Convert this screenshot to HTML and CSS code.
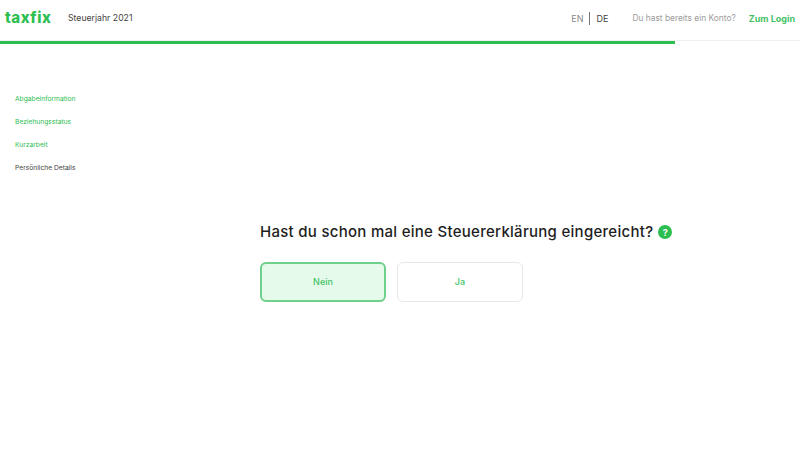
FILE: index.html
```html
<!DOCTYPE html>
<html lang="de">
<head>
  <meta charset="UTF-8">
  <title>Taxfix</title>
  <link rel="stylesheet" href="styles.css">
</head>
<body>
  <div class="header">
    <div class="brand">
      <span class="logo">taxfix</span>
      <span class="year">Steuerjahr 2021</span>
    </div>
    <div class="account">
      <span class="lang">EN</span>
      <span class="lang-sep"></span>
      <span class="lang lang-active">DE</span>
      <span class="hint">Du hast bereits ein Konto?</span>
      <a class="login">Zum Login</a>
    </div>
  </div>
  <div class="progress"></div>

  <div class="main">
    <ul class="nav">
      <li class="done">Abgabeinformation</li>
      <li class="done">Beziehungsstatus</li>
      <li class="done">Kurzarbeit</li>
      <li>Persönliche Details</li>
    </ul>

    <div class="question">
      <div class="title">
        <h1>Hast du schon mal eine Steuererklärung eingereicht?</h1>
        <span class="help">?</span>
      </div>
      <div class="answers">
        <button class="answer selected">Nein</button>
        <button class="answer">Ja</button>
      </div>
    </div>
  </div>
</body>
</html>
```

FILE: styles.css
```css
body { margin: 0; background-color: #fff; font-family: "Inter", "Liberation Sans", sans-serif; color: #1e1e1e; }
.header { display: flex; justify-content: space-between; align-items: center; height: 41px; padding: 0 5px; box-sizing: border-box; border-bottom: 1px solid #f0f0f0; }
.brand { display: flex; align-items: center; gap: 17px; padding-bottom: 5px; }
.logo { width: 46px; color: #2dbe52; font-size: 15px; font-weight: 800; letter-spacing: 0.55px; line-height: 1; }
.year { font-size: 8.7px; color: #444; }
.account { display: flex; align-items: center; font-size: 8.4px; padding-bottom: 4px; }
.lang { color: #888; font-size: 9px; }
.lang-active { color: #444; }
.lang-sep { width: 1px; height: 13px; margin: 0 6px; background-color: #777; }
.hint { margin-left: 24px; color: #9b9b9b; }
.login { margin-left: 13px; color: #45c266; font-size: 9px; font-weight: 700; }
.progress { width: 675px; height: 3px; background-color: #2dbe52; }
.nav { list-style: none; margin: 0; padding: 48.5px 0 0 15px; font-size: 6.7px; line-height: 12px; color: #444; }
.nav li { margin-bottom: 11.3px; }
.nav .done { color: #2dbe52; }
.question { margin: 47px 0 0 260px; }
.title { display: flex; align-items: center; gap: 5px; }
h1 { margin: 0; font-size: 15px; font-weight: 500; letter-spacing: 0.28px; line-height: 22px; color: #1e1e1e; }
.help { display: flex; justify-content: center; align-items: center; width: 14px; height: 14px; border-radius: 50%; background-color: #2dbe52; color: #fff; font-size: 9px; font-weight: 700; }
.answers { display: flex; gap: 11px; margin-top: 19px; }
.answer { width: 126px; height: 40px; padding: 0 0 1px; border: 1px solid #e8e8e8; border-radius: 6px; background-color: #fff; color: #45c266; font-family: "Inter", sans-serif; font-size: 9px; font-weight: 500; }
.selected { border: 2px solid #6fd08c; background-color: #e5faea; }
```
